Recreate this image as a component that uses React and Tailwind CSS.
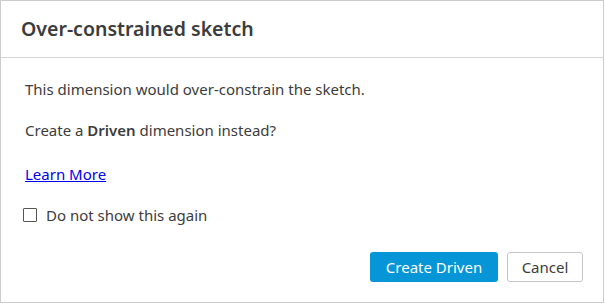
export default function App() {
    return (
        <div className="w-[604px] h-[303px] bg-white border border-[#cccccc] flex flex-col text-[#3c3c3c]" style={{ fontFamily: '"Noto Sans", "Open Sans", sans-serif' }}>
            <div className="h-[57px] border-b border-[#d4d4d4] flex items-center px-[20px] shrink-0">
                <h1 className="text-[19.5px] font-semibold text-[#3c3c3c]">Over-constrained sketch</h1>
            </div>
            <div className="flex-1 flex flex-col pl-[24px] pr-[20px] pt-[21px] text-[15px]">
                <p className="h-[20px] leading-[20px]">This dimension would over-constrain the sketch.</p>
                <p className="h-[20px] leading-[20px] mt-[21px]">Create a <b className="font-semibold">Driven</b> dimension instead?</p>
                <a href="#" className="h-[20px] leading-[20px] mt-[24px] text-[#0000ee] underline w-fit">Learn More</a>
                <label className="flex items-center gap-[9px] mt-[21px] h-[20px]">
                    <span className="w-[14px] h-[14px] border-[1.5px] border-[#555] rounded-[1px] -ml-[2px]"></span>
                    <span>Do not show this again</span>
                </label>
                <div className="flex justify-end gap-[9px] mt-[27px]">
                    <button className="w-[128px] h-[30px] rounded-[3px] bg-[#0696d7] text-white text-[15px]">Create Driven</button>
                    <button className="w-[76px] h-[30px] rounded-[3px] border border-[#c6c6c6] bg-white text-[15px] text-[#3c3c3c]">Cancel</button>
                </div>
            </div>
        </div>
    );
}
